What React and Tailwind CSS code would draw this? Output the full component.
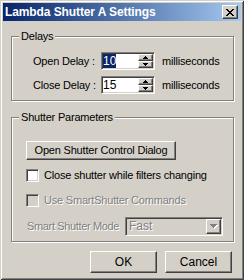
import React from "react";

// win2000 style bevels
const raised =
  "border border-t-white border-l-white border-r-[#404040] border-b-[#404040] shadow-[inset_-1px_-1px_0_#808080] bg-[#d4d0c8]";
const sunken =
  "border border-t-[#808080] border-l-[#808080] border-r-white border-b-white shadow-[inset_1px_1px_0_#404040,inset_-1px_-1px_0_#d4d0c8]";
const etched =
  "border border-[#808080] shadow-[1px_1px_0_#fff,inset_1px_1px_0_#fff]";

const ArrowUp = () => (
  <svg width="5" height="3" shapeRendering="crispEdges">
    <rect x="2" y="0" width="1" height="1" fill="#000" />
    <rect x="1" y="1" width="3" height="1" fill="#000" />
    <rect x="0" y="2" width="5" height="1" fill="#000" />
  </svg>
);

const ArrowDown = () => (
  <svg width="5" height="3" shapeRendering="crispEdges">
    <rect x="0" y="0" width="5" height="1" fill="#000" />
    <rect x="1" y="1" width="3" height="1" fill="#000" />
    <rect x="2" y="2" width="1" height="1" fill="#000" />
  </svg>
);

const Spinner = () => (
  <div className="flex flex-col w-[15px] h-[14px]">
    <div className={`${raised} h-[7px] flex items-center justify-center`}>
      <ArrowUp />
    </div>
    <div className={`${raised} h-[7px] flex items-center justify-center`}>
      <ArrowDown />
    </div>
  </div>
);

const NumberBox = ({ value, selected }) => (
  <div className={`${sunken} bg-white w-[54px] h-[18px] p-[1px] flex items-center`}>
    <div className="flex-1 text-[12px] leading-[14px] tracking-normal">
      <span className={selected ? "bg-[#0a246a] text-white" : "text-black"}>
        {value}
      </span>
    </div>
    <Spinner />
  </div>
);

const DelayRow = ({ label, value, selected }) => (
  <div className="flex items-center h-[18px]">
    <span className="w-[68px]">{label}</span>
    <NumberBox value={value} selected={selected} />
    <span className="ml-[7px]">milliseconds</span>
  </div>
);

const CheckRow = ({ label, disabled }) => (
  <div className="flex items-center h-[13px]">
    <div
      className={`${sunken} w-[13px] h-[13px] ${
        disabled ? "bg-[#d4d0c8]" : "bg-white"
      }`}
    />
    <span
      className={`ml-[5px] ${
        disabled ? "text-[#808080] [text-shadow:1px_1px_0_#fff]" : ""
      }`}
    >
      {label}
    </span>
  </div>
);

const CloseGlyph = () => (
  <svg width="8" height="7" shapeRendering="crispEdges">
    {[
      [0, 0], [6, 0],
      [1, 1], [5, 1],
      [2, 2], [4, 2],
      [3, 3],
      [2, 4], [4, 4],
      [1, 5], [5, 5],
      [0, 6], [6, 6],
    ].map(([x, y]) => (
      <rect key={`${x}-${y}`} x={x} y={y} width="2" height="1" fill="#000" />
    ))}
  </svg>
);

export default function App() {
  return (
    <div className="w-[244px] h-[280px] bg-[#d4d0c8] p-[3px] flex flex-col font-['Liberation_Sans',Arial,sans-serif] text-[11px] leading-[13px] tracking-[-0.2px] text-black shadow-[inset_1px_1px_0_#d4d0c8,inset_-1px_-1px_0_#404040,inset_2px_2px_0_#fff,inset_-2px_-2px_0_#808080]">
      {/* Title bar */}
      <div className="h-[18px] flex items-center justify-between bg-linear-to-r from-[#0a246a] to-[#a6caf0] pl-[2px] pr-[3px]">
        <span className="text-white font-bold text-[12px] tracking-[-0.1px]">
          Lambda Shutter A Settings
        </span>
        <div className={`${raised} w-[16px] h-[14px] flex items-center justify-center`}>
          <CloseGlyph />
        </div>
      </div>

      <div className="flex flex-col pl-[8px] pr-[7px]">
        {/* Delays */}
        <fieldset className={`${etched} mt-[9px] h-[71px] m-0 p-0`}>
          <legend className="ml-[7px] px-[2px] bg-[#d4d0c8] leading-[13px]">
            Delays
          </legend>
          <div className="flex flex-col gap-[6px] pt-[9px] pl-[21px]">
            <DelayRow label="Open Delay :" value="10" selected />
            <DelayRow label="Close Delay :" value="15" />
          </div>
        </fieldset>

        {/* Shutter Parameters */}
        <fieldset className={`${etched} mt-[10px] h-[131px] p-0`}>
          <legend className="ml-[7px] px-[2px] bg-[#d4d0c8] leading-[13px]">
            Shutter Parameters
          </legend>
          <div className="flex flex-col pt-[17px] pl-[14px]">
            <button
              className={`${raised} w-[150px] h-[19px] flex items-center justify-center text-[11px] tracking-[-0.2px]`}
            >
              Open Shutter Control Dialog
            </button>
            <div className="mt-[9px]">
              <CheckRow label="Close shutter while filters changing" />
            </div>
            <div className="mt-[12px]">
              <CheckRow label="Use SmartShutter Commands" disabled />
            </div>
            <div className="mt-[10px] flex items-center h-[19px]">
              <span className="w-[99px] pl-[1px] tracking-[-0.35px] text-[#808080] [text-shadow:1px_1px_0_#fff]">
                Smart Shutter Mode
              </span>
              <div className={`${sunken} w-[98px] h-[19px] p-[1px] flex items-center bg-[#d4d0c8]`}>
                <span className="flex-1 pl-[2px] text-[12px] tracking-normal text-[#808080] [text-shadow:1px_1px_0_#fff]">
                  Fast
                </span>
                <div className={`${raised} w-[15px] h-full flex items-center justify-center`}>
                  <svg width="8" height="5" shapeRendering="crispEdges">
                    <path d="M1 1h7v1H1zM2 2h5v1H2zM3 3h3v1H3zM4 4h1v1H4z" fill="#fff" />
                    <path d="M0 0h7v1H0zM1 1h5v1H1zM2 2h3v1H2zM3 3h1v1H3z" fill="#808080" />
                  </svg>
                </div>
              </div>
            </div>
          </div>
        </fieldset>

        {/* Buttons */}
        <div className="flex justify-end gap-[8px] mt-[9px] pr-[2px]">
          <button className={`${raised} w-[67px] h-[22px] text-[12px] tracking-normal`}>
            OK
          </button>
          <button className={`${raised} w-[67px] h-[22px] text-[12px] tracking-normal`}>
            Cancel
          </button>
        </div>
      </div>
    </div>
  );
}
